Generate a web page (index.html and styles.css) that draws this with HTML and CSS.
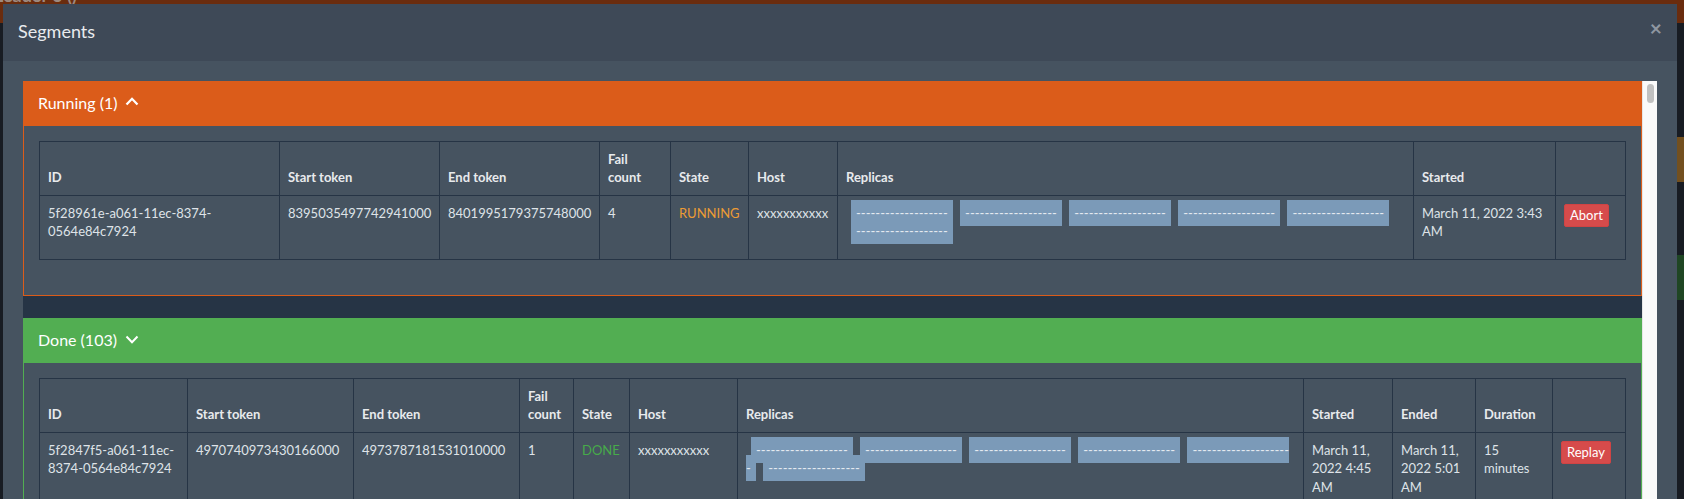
FILE: index.html
```html
<!DOCTYPE html>
<html lang="en">
<head>
<meta charset="utf-8">
<title>Segments</title>
<link rel="stylesheet" href="styles.css">
</head>
<body>
<div class="page">
  <header class="navbar">
    <span class="brand">Leader 3 ()</span>
    <span class="theme">Switch theme ▾</span>
  </header>
  <div class="page-main">
    <div class="page-side">
      <div class="blk blk-amber"></div>
      <div class="blk blk-green"></div>
    </div>
  </div>
</div>

<div class="modal">
  <div class="modal-header">
    <h4 class="modal-title">Segments</h4>
    <button class="close" type="button">×</button>
  </div>
  <div class="modal-body">
    <div class="scroll-wrap">
      <div class="scroll-content">

        <section class="panel panel-running">
          <div class="panel-heading">
            <span>Running (1)</span>
            <svg class="chev chev-up" viewBox="0 0 14 10" width="14" height="10"><polyline points="1.5,8.5 7,2.8 12.5,8.5" fill="none" stroke="#fff" stroke-width="2.3"/></svg>
          </div>
          <div class="panel-body">
            <table class="seg-table">
              <colgroup>
                <col class="r-id"><col class="r-start"><col class="r-end"><col class="r-fail"><col class="r-state"><col class="r-host"><col class="r-rep"><col class="r-started"><col class="r-act">
              </colgroup>
              <thead>
                <tr><th>ID</th><th>Start token</th><th>End token</th><th>Fail count</th><th>State</th><th>Host</th><th>Replicas</th><th>Started</th><th></th></tr>
              </thead>
              <tbody>
                <tr>
                  <td>5f28961e-a061-11ec-8374-0564e84c7924</td>
                  <td>8395035497742941000</td>
                  <td>8401995179375748000</td>
                  <td>4</td>
                  <td class="state-running">RUNNING</td>
                  <td>xxxxxxxxxxx</td>
                  <td><p class="reps"><span class="rep">-------------------</span> <span class="rep">-------------------</span> <span class="rep">-------------------</span> <span class="rep">-------------------</span> <span class="rep">-------------------</span> <span class="rep">-------------------</span></p></td>
                  <td>March 11, 2022 3:43 AM</td>
                  <td><button class="btn-danger" type="button">Abort</button></td>
                </tr>
              </tbody>
            </table>
          </div>
        </section>

        <section class="panel panel-done">
          <div class="panel-heading">
            <span>Done (103)</span>
            <svg class="chev chev-down" viewBox="0 0 14 10" width="14" height="10"><polyline points="1.5,1.5 7,7.2 12.5,1.5" fill="none" stroke="#fff" stroke-width="2"/></svg>
          </div>
          <div class="panel-body">
            <table class="seg-table">
              <colgroup>
                <col class="d-id"><col class="d-start"><col class="d-end"><col class="d-fail"><col class="d-state"><col class="d-host"><col class="d-rep"><col class="d-started"><col class="d-ended"><col class="d-dur"><col class="d-act">
              </colgroup>
              <thead>
                <tr><th>ID</th><th>Start token</th><th>End token</th><th>Fail count</th><th>State</th><th>Host</th><th>Replicas</th><th>Started</th><th>Ended</th><th>Duration</th><th></th></tr>
              </thead>
              <tbody>
                <tr>
                  <td>5f2847f5-a061-11ec-8374-0564e84c7924</td>
                  <td>4970740973430166000</td>
                  <td>4973787181531010000</td>
                  <td>1</td>
                  <td class="state-done">DONE</td>
                  <td>xxxxxxxxxxx</td>
                  <td><p class="reps"><span class="rep">-------------------</span> <span class="rep">-------------------</span> <span class="rep">-------------------</span> <span class="rep">-------------------</span> <span class="rep">---------------------</span> <span class="rep">-------------------</span></p></td>
                  <td>March 11, 2022 4:45 AM</td>
                  <td>March 11, 2022 5:01 AM</td>
                  <td>15 minutes</td>
                  <td><button class="btn-danger" type="button">Replay</button></td>
                </tr>
              </tbody>
            </table>
          </div>
        </section>

      </div>
      <div class="scroll-track"><div class="scroll-thumb"></div></div>
    </div>
  </div>
</div>
</body>
</html>
```

FILE: styles.css
```css
* { box-sizing: border-box; }

html, body {
  margin: 0;
  height: 100%;
}

body {
  background: #181c23;
  font-family: Lato, "Noto Sans", sans-serif;
  font-size: 13px;
  line-height: 1.42857;
  color: #dfe3e8;
  overflow: hidden;
}

/* background page (dimmed behind the modal) */
.navbar {
  height: 35px;
  margin-top: -12px;
  background: #6a2c0e;
  display: flex;
  justify-content: space-between;
  align-items: flex-start;
}
.brand {
  font-size: 18px;
  font-weight: 700;
  line-height: 14px;
  color: #9d8a80;
  margin-left: -6px;
}
.theme {
  font-size: 14px;
  line-height: 14px;
  color: #9d8a80;
  margin-right: 16px;
}
.page-main {
  display: flex;
  justify-content: flex-end;
}
.page-side { width: 220px; }
.blk { height: 45px; }
.blk-amber { margin-top: 114px; background: #73501f; }
.blk-green { margin-top: 73px; background: #1f4624; }

/* modal */
.modal {
  position: fixed;
  top: 4px;
  left: 3px;
  width: 1674px;
  background: #465360;
}
.modal-header {
  background: #3e4957;
  padding: 15px;
  border-bottom: 1px solid #3e4957;
  display: flex;
  justify-content: space-between;
  align-items: flex-start;
}
.modal-title {
  margin: 0;
  font-size: 18px;
  font-weight: 400;
  line-height: 1.42857;
  color: #e9ebee;
}
.close {
  background: none;
  border: 0;
  padding: 0;
  margin-top: -2px;
  font-family: Lato, "Noto Sans", sans-serif;
  font-size: 21px;
  font-weight: 700;
  line-height: 1;
  color: #8f97a1;
  cursor: pointer;
}
.modal-body {
  padding: 20px;
}
.scroll-wrap {
  display: flex;
  height: calc(100vh - 60px);
}
.scroll-content {
  flex: 1;
  min-width: 0;
  overflow: hidden;
  background: #263445;
}
.scroll-track {
  flex: none;
  width: 15px;
  background: #fafafa;
  border-left: 1px solid #e6e6e6;
}
.scroll-thumb {
  margin: 3px 3px 0 4px;
  height: 19px;
  border-radius: 4px;
  background: #c1c1c1;
}

/* panels */
.panel { margin-bottom: 22px; }
.panel:last-child { margin-bottom: 0; }
.panel-heading {
  display: flex;
  align-items: center;
  gap: 8px;
  padding: 11px 15px;
  font-size: 16px;
  line-height: 1.42857;
  color: #fff;
}
.chev { display: block; flex: none; }
.chev-up { margin-bottom: 4px; }
.panel-body {
  background: #465360;
  padding: 15px;
  border: 1px solid;
  border-top: 0;
}
.panel-running .panel-heading { background: #db5c1a; }
.panel-running .panel-body { border-color: #db5c1a; }
.panel-done .panel-heading { background: #52ae52; }
.panel-done .panel-body { border-color: #52ae52; }

/* tables */
.seg-table {
  width: 100%;
  border-collapse: collapse;
  table-layout: fixed;
  margin-bottom: 20px;
  border: 1px solid #263445;
}
.seg-table th,
.seg-table td {
  border: 1px solid #263445;
  padding: 8px;
  text-align: left;
  vertical-align: top;
}
.seg-table th {
  vertical-align: bottom;
  font-weight: 700;
  color: #e8eaed;
}

.r-id { width: 240px; }
.r-start { width: 160px; }
.r-end { width: 160px; }
.r-fail { width: 71px; }
.r-state { width: 78px; }
.r-host { width: 89px; }
.r-rep { width: 576px; }
.r-started { width: 142px; }
.r-act { width: 70px; }

.d-id { width: 148px; }
.d-start { width: 166px; }
.d-end { width: 166px; }
.d-fail { width: 54px; }
.d-state { width: 56px; }
.d-host { width: 108px; }
.d-rep { width: 566px; }
.d-started { width: 89px; }
.d-ended { width: 83px; }
.d-dur { width: 77px; }
.d-act { width: 73px; }

.state-running { color: #ec9c34; }
.state-done { color: #47aa4a; }

.reps {
  margin: 0 0 10px;
  word-break: break-all;
}
.rep {
  background: #7b9ab8;
  color: #e4eaf0;
  padding: 5px;
  margin-left: 5px;
  margin-right: -1px;
}

.btn-danger {
  font-family: Lato, "Noto Sans", sans-serif;
  font-size: 13px;
  line-height: 1.5;
  padding: 1px 5px;
  color: #fff;
  background: #d64b4b;
  border: 1px solid #d04444;
  border-radius: 2px;
  cursor: pointer;
}
```
